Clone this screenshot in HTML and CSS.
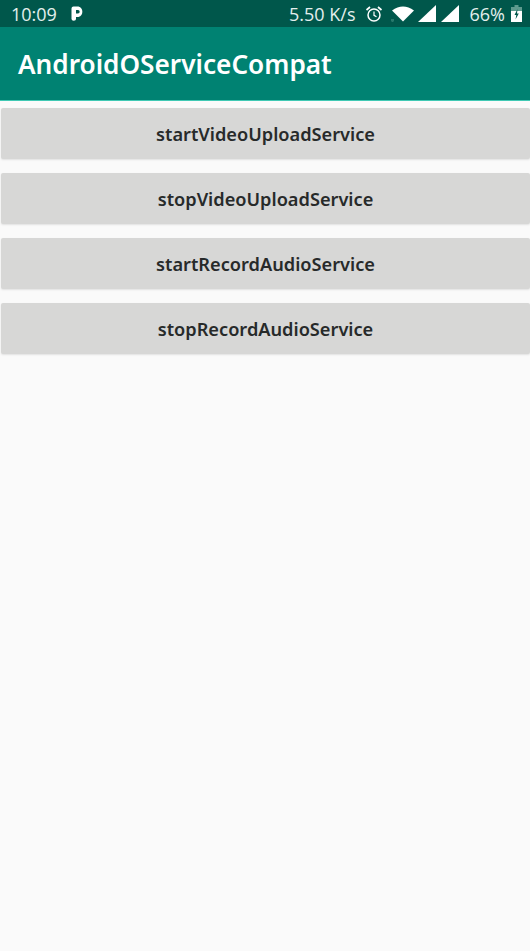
FILE: index.html
```
<!DOCTYPE html>
<html lang="en">
<head>
<meta charset="utf-8">
<title>AndroidOServiceCompat</title>
<link rel="stylesheet" href="styles.css">
</head>
<body>
<div class="status">
  <div class="status-left">
    <span class="clock">10:09</span>
    <svg class="p-icon" width="13" height="15" viewBox="0 0 13 15"><path fill="#fff" fill-rule="evenodd" d="M.5 2.500Q.5 .5 2.500 .5H7.500A5.500 5.500 0 0 1 7.500 11H5V13Q5 14.800 2.800 14.800T.5 13ZM5 4V7.400H7A1.700 1.700 0 0 0 7 4Z"/></svg>
  </div>
  <div class="status-right">
    <span class="speed">5.50 K/s</span>
    <svg class="alarm" width="18" height="18" viewBox="0 0 18 18"><g fill="none" stroke="#fff"><circle cx="9" cy="10" r="6" stroke-width="1.5"/><path d="M9 6.500V10.300L11.500 11.800" stroke-width="1.200"/><path d="M1.500 5L5 2M16.500 5L13 2" stroke-width="1.700"/></g></svg>
    <svg class="wifi" width="24" height="16" viewBox="0 0 24 16"><path fill="#fff" d="M1 4.500Q12 -3.500 23 4.500L12 15.500Z"/><path fill="none" stroke="#4f9a8c" stroke-width="1" d="M0 14H3M.5 16H2.500"/></svg>
    <svg class="signal" width="18" height="17" viewBox="0 0 18 17"><path fill="#fff" d="M0 17L18 0V17Z"/></svg>
    <svg class="signal" width="18" height="17" viewBox="0 0 18 17"><path fill="#fff" d="M0 17L18 0V17Z"/></svg>
    <span class="battery-text">66%</span>
    <svg class="battery" width="11" height="17" viewBox="0 0 11 17"><path fill="#5e9a8e" d="M3.500 0H7.500V2H11V6H0V2H3.500Z"/><path fill="#fff" d="M0 6H11V17H0Z"/><path fill="#00574b" d="M6.500 4L3.500 10H5.300L4.500 14.500L7.800 8.500H6Z"/></svg>
  </div>
</div>
<header class="appbar"><h1 class="title">AndroidOServiceCompat</h1></header>
<main class="actions">
  <button class="action" type="button">startVideoUploadService</button>
  <button class="action" type="button">stopVideoUploadService</button>
  <button class="action" type="button">startRecordAudioService</button>
  <button class="action" type="button">stopRecordAudioService</button>
</main>
</body>
</html>
```

FILE: styles.css
```
* { box-sizing: border-box; }
html, body { margin: 0; height: 100%; }
body {
  background: #fafafa;
  font-family: "Noto Sans", "Open Sans", sans-serif;
  overflow: hidden;
}
.status {
  height: 27px;
  background: #00574b;
  color: #e4efed;
  display: flex;
  justify-content: space-between;
  align-items: center;
  padding: 0 8px 0 11px;
  font-size: 18px;
  font-family: "Open Sans", sans-serif;
}
.status-left, .status-right { display: flex; align-items: center; }
.p-icon { margin-left: 14px; }
.speed { margin-right: 9px; }
.alarm { margin-right: 8px; }
.wifi { margin-right: 3px; }
.signal { margin-right: 5px; }
.battery-text { margin: 0 6px 0 6px; }
.appbar {
  height: 74px;
  background: #008272;
  border-bottom: 1px solid #40c9b4;
  display: flex;
  align-items: center;
  padding: 0 18px;
}
.title {
  margin: 0;
  font-size: 26.200px;
  font-weight: 600;
  color: #fff;
}
.actions {
  display: flex;
  flex-direction: column;
  gap: 14px;
  padding: 7px 0 0 1px;
}
.action {
  height: 51px;
  padding: 1px 0 0;
  margin: 0;
  border: 0;
  border-radius: 2px;
  background: #d7d7d6;
  box-shadow: 0 1px 2px rgba(0,0,0,.1);
  color: #272a2a;
  font: 600 18.200px "Noto Sans", "Open Sans", sans-serif;
}
```
